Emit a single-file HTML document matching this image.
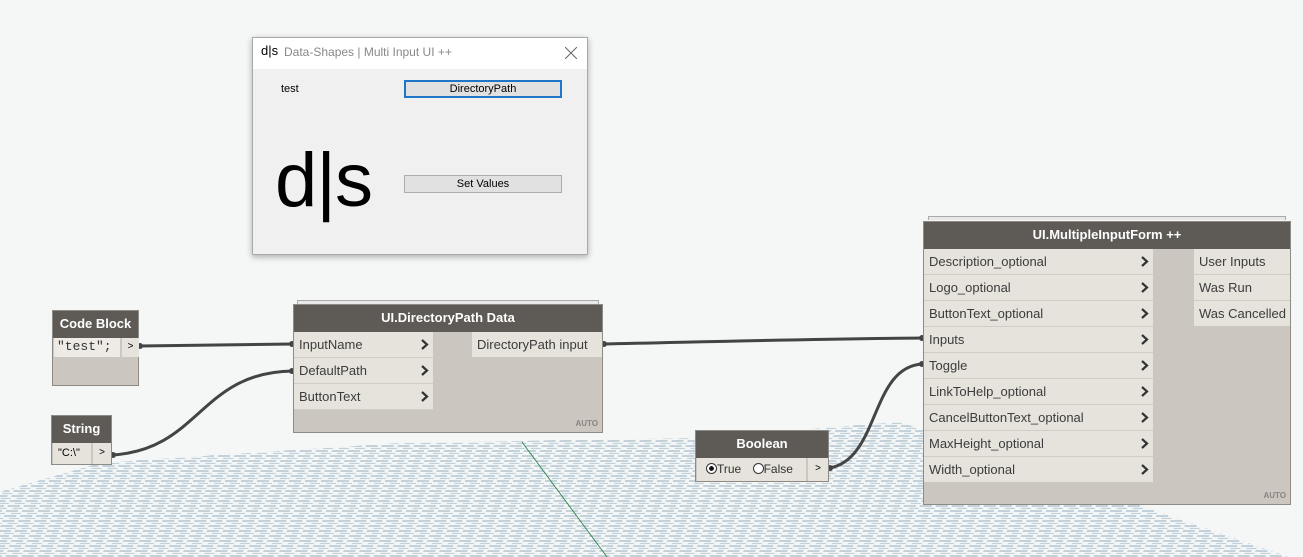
<!DOCTYPE html>
<html><head><meta charset="utf-8">
<style>
*{box-sizing:border-box;margin:0;padding:0}
body{width:1303px;height:557px;overflow:hidden;background:#f5f6f6;position:relative;font-family:"Liberation Sans",sans-serif;}
.abs{position:absolute;white-space:nowrap}
.node{position:absolute;background:#cbc6bf;border:1px solid #8e8a86;white-space:nowrap}
.hdr{background:#5e5a56;color:#fff;font-weight:bold;font-size:13px;text-align:center;line-height:26px;height:27px}
.row{position:absolute;background:#e6e2dc;font-size:13px;color:#3c3c3c;line-height:25px;padding-left:5px;border-bottom:1px solid #d0ccc6;white-space:nowrap}
.chev{position:absolute;right:4px;top:7px;width:8px;height:11px}
.auto{position:absolute;right:4px;bottom:4px;font-size:8px;font-weight:bold;color:#8a8580}
.stack{position:absolute;border:1px solid #aaa;border-bottom:none;background:#e8e8e8;height:4px}
</style></head><body>
<svg class="abs" style="left:0;top:0" width="1303" height="557">
<defs>
<pattern id="g" width="16" height="5" patternUnits="userSpaceOnUse" patternTransform="skewX(-20)">
<line x1="0" y1="1" x2="12" y2="1" stroke="#8fabbf" stroke-width="1"/>
<line x1="6" y1="3.5" x2="16" y2="3.5" stroke="#b3c9d6" stroke-width="1"/>
</pattern>
</defs>
<polygon points="0,492 100,463 400,443 700,438 900,422 1303,562 0,557" fill="url(#g)"/>
<line x1="522" y1="442" x2="607" y2="557" stroke="#1a7a3a" stroke-width="0.8"/>
<g stroke="#444" stroke-width="3" fill="none">
<path d="M139,346 L293,344"/>
<path d="M112,455 C200,450 200,372 293,371"/>
<path d="M603,344 C700,342 800,339 923,338"/>
<path d="M829,468 C880,460 870,366 923,364"/>
</g>
<g fill="#444"><circle cx="140" cy="346" r="3"/><circle cx="292" cy="344" r="3"/><circle cx="113" cy="455" r="3"/><circle cx="292" cy="371" r="3"/><circle cx="604" cy="344" r="3"/><circle cx="922" cy="338" r="3"/><circle cx="830" cy="468" r="3"/><circle cx="922" cy="364" r="3"/></g>
</svg>

<div class="abs" style="left:252px;top:37px;width:336px;height:218px;background:#f0f0f0;border:1px solid #aaa;box-shadow:0 2px 6px rgba(0,0,0,.3)">
 <div style="height:31px;background:#fff;position:relative">
  <span class="abs" style="left:8px;top:5px;font-size:13px;color:#000">d|s</span>
  <span class="abs" style="left:31px;top:7px;font-size:12px;color:#888">Data-Shapes | Multi Input UI ++</span>
  <svg class="abs" style="right:10px;top:9px" width="12" height="12"><path d="M0,0 L12,12 M12,0 L0,12" stroke="#666" stroke-width="1"/></svg>
 </div>
 <span class="abs" style="left:28px;top:45px;font-size:11px">test</span>
 <div class="abs" style="left:151px;top:42px;width:158px;height:18px;border:2px solid #1f76c8;background:#e1e1e1;font-size:11px;text-align:center;line-height:14px">DirectoryPath</div>
 <div class="abs" style="left:22px;top:98px;font-size:76px;line-height:90px;font-family:'Liberation Sans',sans-serif;letter-spacing:-1px">d|s</div>
 <div class="abs" style="left:151px;top:137px;width:158px;height:18px;border:1px solid #adadad;background:#e1e1e1;font-size:11px;text-align:center;line-height:16px">Set Values</div>
</div>

<div class="node" style="left:52px;top:310px;width:87px;height:76px">
 <div class="hdr">Code Block</div>
 <div class="abs" style="left:1px;top:27px;width:66px;height:19px;background:#eeebe6;font-family:'Liberation Mono',monospace;font-size:13px;line-height:18px;padding-left:3px;color:#333">"test";</div>
 <div class="abs" style="left:69px;top:27px;width:17px;height:19px;background:#e6e2dc;font-size:10px;line-height:18px;text-align:center">&gt;</div>
</div>
<div class="node" style="left:51px;top:415px;width:61px;height:50px">
 <div class="hdr">String</div>
 <div class="abs" style="left:1px;top:27px;width:38px;height:21px;background:#e6e2dc;font-size:11px;line-height:20px;padding-left:5px">"C:\"</div>
 <div class="abs" style="left:41px;top:27px;width:18px;height:21px;background:#e6e2dc;font-size:10px;line-height:20px;text-align:center">&gt;</div>
</div>

<div class="stack" style="left:297px;top:300px;width:302px"></div>
<div class="node" style="left:293px;top:304px;width:310px;height:129px">
 <div class="hdr">UI.DirectoryPath Data</div>
 <div class="row" style="left:0;top:27px;width:139px">InputName<svg class="chev"><path d="M1,1 L6,5.5 L1,10" stroke="#333" stroke-width="2.2" fill="none"/></svg></div>
 <div class="row" style="left:0;top:53px;width:139px">DefaultPath<svg class="chev"><path d="M1,1 L6,5.5 L1,10" stroke="#333" stroke-width="2.2" fill="none"/></svg></div>
 <div class="row" style="left:0;top:79px;width:139px">ButtonText<svg class="chev"><path d="M1,1 L6,5.5 L1,10" stroke="#333" stroke-width="2.2" fill="none"/></svg></div>
 <div class="row" style="left:178px;top:27px;width:130px;border:none">DirectoryPath input</div>
 <div class="auto">AUTO</div>
</div>

<div class="node" style="left:695px;top:430px;width:134px;height:52px">
 <div class="hdr">Boolean</div>
 <div class="abs" style="left:1px;top:27px;width:109px;height:23px;background:#e6e2dc;font-size:12px;line-height:22px;color:#333">
  <span style="display:inline-block;width:11px;height:11px;border:1px solid #333;border-radius:50%;vertical-align:-1px;margin-left:9px;background:radial-gradient(#111 35%,#fff 40%)"></span>True
  <span style="display:inline-block;width:11px;height:11px;border:1px solid #333;border-radius:50%;vertical-align:-1px;margin-left:8px;background:#fff"></span>False
 </div>
 <div class="abs" style="left:112px;top:27px;width:20px;height:23px;background:#e6e2dc;font-size:10px;line-height:22px;text-align:center">&gt;</div>
</div>

<div class="stack" style="left:928px;top:216px;width:358px"></div>
<div class="node" style="left:923px;top:221px;width:368px;height:284px">
 <div class="hdr">UI.MultipleInputForm ++</div>
 <div class="row" style="left:0;top:27px;width:229px">Description_optional<svg class="chev"><path d="M1,1 L6,5.5 L1,10" stroke="#333" stroke-width="2.2" fill="none"/></svg></div>
 <div class="row" style="left:0;top:53px;width:229px">Logo_optional<svg class="chev"><path d="M1,1 L6,5.5 L1,10" stroke="#333" stroke-width="2.2" fill="none"/></svg></div>
 <div class="row" style="left:0;top:79px;width:229px">ButtonText_optional<svg class="chev"><path d="M1,1 L6,5.5 L1,10" stroke="#333" stroke-width="2.2" fill="none"/></svg></div>
 <div class="row" style="left:0;top:105px;width:229px">Inputs<svg class="chev"><path d="M1,1 L6,5.5 L1,10" stroke="#333" stroke-width="2.2" fill="none"/></svg></div>
 <div class="row" style="left:0;top:131px;width:229px">Toggle<svg class="chev"><path d="M1,1 L6,5.5 L1,10" stroke="#333" stroke-width="2.2" fill="none"/></svg></div>
 <div class="row" style="left:0;top:157px;width:229px">LinkToHelp_optional<svg class="chev"><path d="M1,1 L6,5.5 L1,10" stroke="#333" stroke-width="2.2" fill="none"/></svg></div>
 <div class="row" style="left:0;top:183px;width:229px">CancelButtonText_optional<svg class="chev"><path d="M1,1 L6,5.5 L1,10" stroke="#333" stroke-width="2.2" fill="none"/></svg></div>
 <div class="row" style="left:0;top:209px;width:229px">MaxHeight_optional<svg class="chev"><path d="M1,1 L6,5.5 L1,10" stroke="#333" stroke-width="2.2" fill="none"/></svg></div>
 <div class="row" style="left:0;top:235px;width:229px;border:none">Width_optional<svg class="chev"><path d="M1,1 L6,5.5 L1,10" stroke="#333" stroke-width="2.2" fill="none"/></svg></div>
 <div class="row" style="left:270px;top:27px;width:96px">User Inputs</div>
 <div class="row" style="left:270px;top:53px;width:96px">Was Run</div>
 <div class="row" style="left:270px;top:79px;width:96px;border:none">Was Cancelled</div>
 <div class="auto">AUTO</div>
</div>
</body></html>
